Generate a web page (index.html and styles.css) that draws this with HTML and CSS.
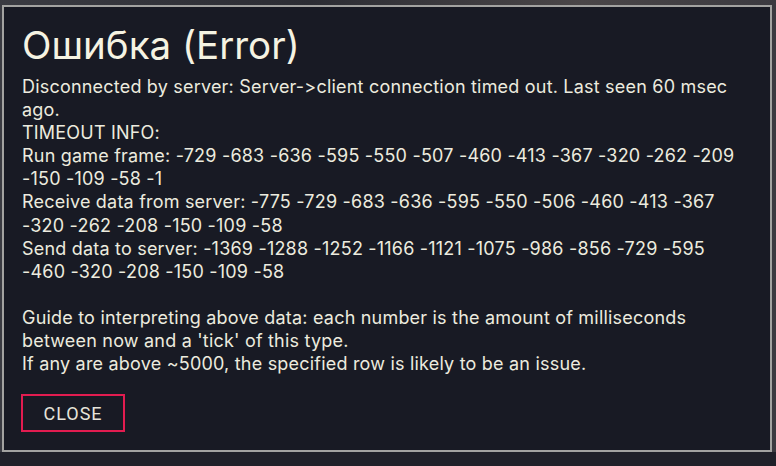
FILE: index.html
```html
<!DOCTYPE html>
<html lang="en">
  <head>
    <meta charset="UTF-8" />
    <title>Ошибка (Error)</title>
    <link rel="stylesheet" href="styles.css">
  </head>
  <body>
    <div class="backdrop">
      <div class="dialog">
        <h1 class="title">Ошибка (Error)</h1>
        <p class="message">Disconnected by server: Server-&gt;client connection timed out. Last seen 60 msec ago.<br />TIMEOUT INFO:<br />Run game frame: -729 -683 -636 -595 -550 -507 -460 -413 -367 -320 -262 -209 -150 -109 -58 -1<br />Receive data from server: -775 -729 -683 -636 -595 -550 -506 -460 -413 -367 -320 -262 -208 -150 -109 -58<br />Send data to server: -1369 -1288 -1252 -1166 -1121 -1075 -986 -856 -729 -595 -460 -320 -208 -150 -109 -58<br /><br />Guide to interpreting above data: each number is the amount of milliseconds between now and a 'tick' of this type.<br />If any are above ~5000, the specified row is likely to be an issue.</p>
        <button class="close">CLOSE</button>
      </div>
    </div>
  </body>
</html>
```

FILE: styles.css
```css
body {
  background: #1f2029;
  margin: 0;
}

.backdrop {
  background: linear-gradient(90deg, #3a3b42 0%, #2c2d34 40%, #4a4648 75%, #3b3a40 100%);
  padding: 5px 4px 0 2px;
  height: 452px;
  box-sizing: border-box;
}

.dialog {
  background: #181a24;
  border: 2px solid #a3a3a1;
  box-sizing: border-box;
  height: 447px;
  padding: 15px 18px 0 18px;
  color: #ecebdf;
  font-family: Inter, "Noto Sans", sans-serif;
  font-variant-ligatures: none;
  font-feature-settings: "calt" 0;
}

.title {
  font-size: 38.5px;
  font-weight: 400;
  line-height: 46px;
  margin: 0 0 7px 0;
  color: #f5f3e2;
}

.message {
  font-size: 18px;
  line-height: 23.1px;
  letter-spacing: 0.2px;
  margin: 0;
}

.close {
  background: none;
  border: 2px solid #e21c50;
  color: #e6e4da;
  font-family: Roboto, sans-serif;
  font-size: 18px;
  letter-spacing: 1px;
  width: 104px;
  height: 38px;
  margin: 19px 0 0 -1px;
  padding: 0;
}
```
